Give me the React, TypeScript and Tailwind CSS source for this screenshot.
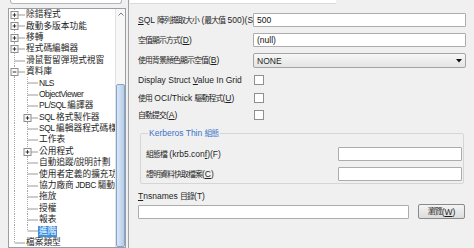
const FONT = "font-['Liberation_Sans_Narrow','Liberation_Sans','Noto_Sans_CJK_TC',sans-serif]";

const isCJK = (c: string) => /[\u2E80-\u9FFF\uF900-\uFAFF\uFF00-\uFFEF]/.test(c);

// splits a label into CJK / latin runs; "&X" marks the mnemonic letter
function T({ s, cjk, lat }: { s: string; cjk: string; lat: string }) {
  const out: { k: string; t: string }[] = [];
  let i = 0;
  while (i < s.length) {
    if (s[i] === '&') {
      out.push({ k: 'u', t: s[i + 1] });
      i += 2;
      continue;
    }
    const c = isCJK(s[i]);
    let j = i;
    while (j < s.length && s[j] !== '&' && isCJK(s[j]) === c) j++;
    out.push({ k: c ? 'c' : 'l', t: s.slice(i, j) });
    i = j;
  }
  return (
    <>
      {out.map((r, n) =>
        r.k === 'u' ? (
          <u key={n} className={lat}>{r.t}</u>
        ) : (
          <span key={n} className={r.k === 'c' ? cjk : lat}>{r.t}</span>
        )
      )}
    </>
  );
}

const L = ({ s }: { s: string }) => <T s={s} cjk="text-[7.8px] tracking-[-0.8px]" lat="text-[8.5px]" />;

type Item = { t: string; l: 0 | 1; e?: '+' | '-'; sel?: boolean };

const tree: Item[] = [
  { t: '除錯程式', l: 0, e: '+' },
  { t: '啟動多版本功能', l: 0, e: '+' },
  { t: '移轉', l: 0, e: '+' },
  { t: '程式碼編輯器', l: 0, e: '+' },
  { t: '滑鼠暫留彈現式視窗', l: 0 },
  { t: '資料庫', l: 0, e: '-' },
  { t: 'NLS', l: 1 },
  { t: 'ObjectViewer', l: 1 },
  { t: 'PL/SQL 編譯器', l: 1 },
  { t: 'SQL 格式製作器', l: 1, e: '+' },
  { t: 'SQL 編輯器程式碼樣板', l: 1 },
  { t: '工作表', l: 1 },
  { t: '公用程式', l: 1, e: '+' },
  { t: '自動追蹤/說明計劃', l: 1 },
  { t: '使用者定義的擴充功能', l: 1 },
  { t: '協力廠商 JDBC 驅動程式', l: 1 },
  { t: '拖放', l: 1 },
  { t: '授權', l: 1 },
  { t: '報表', l: 1 },
  { t: '進階', l: 1, sel: true },
  { t: '檔案類型', l: 0 },
];

function Guides({ item, i }: { item: Item; i: number }) {
  const last = i === tree.length - 1;
  const w = item.l === 0 ? 17 : 30;
  const vx = item.l === 0 ? 5.5 : 18.5;
  return (
    <svg width={w} height="11.4" className="shrink-0 overflow-visible">
      <line x1="5.5" y1="0" x2="5.5" y2={last ? 6 : 11.4} stroke="#a8a8a8" strokeDasharray="1 1" />
      {item.l === 1 && (
        <line x1="18.5" y1="0" x2="18.5" y2={item.sel ? 6 : 11.4} stroke="#a8a8a8" strokeDasharray="1 1" />
      )}
      <line x1={vx} y1="6" x2={w - 1} y2="6" stroke="#9a9a9a" />
      {item.e && (
        <g>
          <rect x={vx - 3.5} y="2.5" width="7" height="7" fill="#fafafa" stroke="#8e8e8e" />
          <line x1={vx - 1.8} y1="6" x2={vx + 1.8} y2="6" stroke="#333" />
          {item.e === '+' && <line x1={vx} y1="4.2" x2={vx} y2="7.8" stroke="#333" />}
        </g>
      )}
    </svg>
  );
}

function Input({ value, className }: { value?: string; className: string }) {
  return (
    <div className={`h-[14px] bg-white border border-[#acacac] rounded-[1px] pl-[3px] flex items-center text-[8.5px] text-[#111] ${className}`}>
      {value}
    </div>
  );
}

function CheckRow({ s, gap }: { s: string; gap: string }) {
  return (
    <div className={`${gap} h-[14px] flex items-center`}>
      <span className="w-[116px] shrink-0 whitespace-nowrap"><L s={s} /></span>
      <div className="w-[10px] h-[10px] bg-white border border-[#8f8f8f]" />
    </div>
  );
}

export default function App() {
  return (
    <div className={`w-[474px] h-[248px] flex bg-[#f0f0f0] overflow-hidden text-[8.5px] leading-[12px] text-[#1e1e1e] ${FONT}`}>
      {/* navigator */}
      <div className="w-[128px] shrink-0 flex flex-col pl-[8px] pr-[2px]">
        <div className="h-[4px] mx-[2px] mr-[4px] bg-white border-x border-b border-[#b5b5b5] rounded-b-[3px]" />
        <div className="mt-[4px] flex-1 flex bg-white border border-[#9a9ea6] overflow-hidden">
          <div className="flex-1 overflow-hidden">
            {tree.map((item, i) => (
              <div key={i} className="flex items-center h-[11.4px] whitespace-nowrap">
                <Guides item={item} i={i} />
                <span className={`leading-[11px] ${item.sel ? 'bg-[#3d8fe0] text-white px-[1px] -ml-[1px]' : ''}`}>
                  <T s={item.t} cjk="text-[8.7px]" lat="text-[8.5px] tracking-[-0.5px]" />
                </span>
              </div>
            ))}
          </div>
          <div className="w-[10px] shrink-0 flex flex-col border-l border-[#e2e2e2] bg-[#f7f7f7]">
            <div className="h-[9px] flex items-center justify-center">
              <svg width="6" height="4" viewBox="0 0 6 4">
                <path d="M0.5 3.5 L3 1 L5.5 3.5" fill="none" stroke="#7a7a7a" strokeWidth="1" />
              </svg>
            </div>
            <div className="h-[66px]" />
            <div className="flex-1 border border-[#86a3c8] rounded-[2px] bg-gradient-to-r from-[#dbe7f6] via-[#c9dbf1] to-[#b6cce9]" />
          </div>
        </div>
      </div>

      {/* settings panel */}
      <div className="flex-1 flex flex-col border-l border-[#a3a3a3] pl-[9px] pr-[8px]">
        <div className="h-[4px] w-[206px] -ml-[8px] bg-white border-b border-[#dadada]" />

        <div className="mt-[9px] flex items-center">
          <span className="w-[115px] shrink-0 whitespace-nowrap"><L s="&SQL 陣列擷取大小 (最大值 500)(S)" /></span>
          <Input value="500" className="flex-1" />
        </div>
        <div className="mt-[6px] flex items-center">
          <span className="w-[115px] shrink-0"><L s="空值顯示方式(&D)" /></span>
          <Input value="(null)" className="flex-1" />
        </div>
        <div className="mt-[6px] flex items-center">
          <span className="w-[115px] shrink-0"><L s="使用背景顏色顯示空值(&B)" /></span>
          <div className="flex-1 h-[15px] flex items-center justify-between pl-[3px] pr-[3px] border border-[#a4a4a4] rounded-[2px] bg-gradient-to-b from-[#f7f7f7] to-[#e4e4e4]">
            <span>NONE</span>
            <svg width="6" height="4" viewBox="0 0 6 4">
              <path d="M0 0 H6 L3 3.5 Z" fill="#111" />
            </svg>
          </div>
        </div>
        <CheckRow gap="mt-[5px]" s="Display Struct &Value In Grid" />
        <CheckRow gap="mt-[4px]" s="使用 OCI/Thick 驅動程式(&U)" />
        <CheckRow gap="mt-[3px]" s="自動提交(&A)" />

        <fieldset className="mt-[5px] ml-[2px] mr-[2px] border border-[#d5d5d5] rounded-[2px] px-[5px] pr-[1px] pb-[2px]">
          <legend className="ml-[2px] px-[1px] text-[#3b73c8] leading-[12px]"><L s="Kerberos Thin 組態" /></legend>
          <div className="mt-[7px] flex items-center">
            <span className="w-[192px] shrink-0"><L s="組態檔 (krb5.con&f)(F)" /></span>
            <Input className="flex-1 h-[13px]" />
          </div>
          <div className="mt-[6px] flex items-center">
            <span className="w-[192px] shrink-0"><L s="證明資料快取檔案(&C)" /></span>
            <Input className="flex-1 h-[13px]" />
          </div>
        </fieldset>

        <div className="mt-[6px] leading-[12px]"><L s="&Tnsnames 目錄(T)" /></div>
        <div className="mt-[1px] flex items-center">
          <Input className="w-[271px]" />
          <button className="ml-[9px] w-[47px] h-[15px] border border-[#8a8a8a] rounded-[2px] bg-gradient-to-b from-[#f4f4f4] to-[#dcdcdc] flex items-center justify-center">
            <L s="瀏覽(&W)" />
          </button>
        </div>
      </div>
    </div>
  );
}
